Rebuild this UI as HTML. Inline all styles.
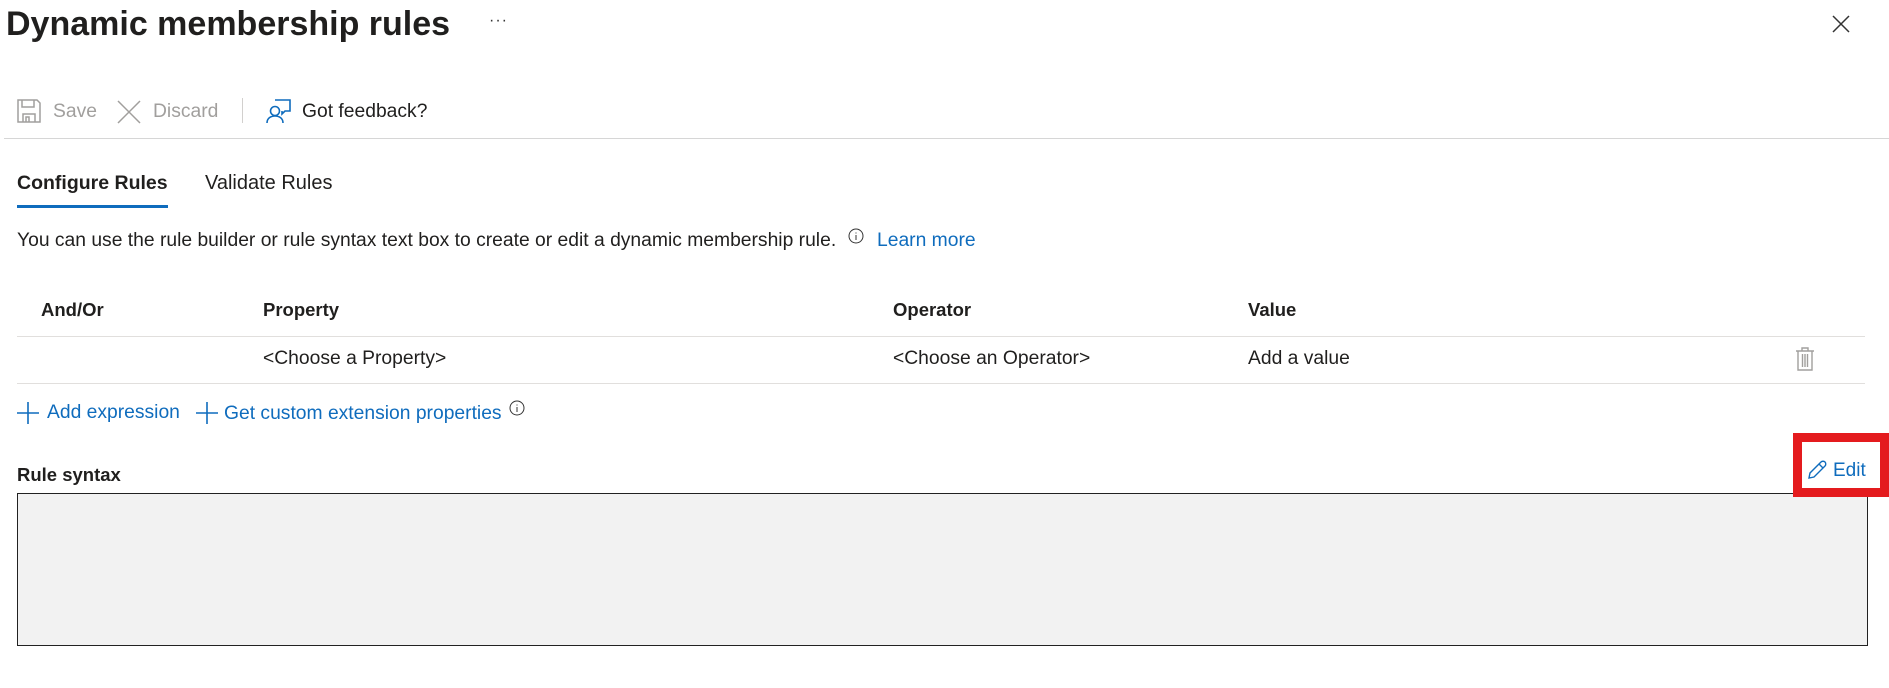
<!DOCTYPE html>
<html><head><meta charset="utf-8"><style>
body{margin:0;width:1889px;height:688px;background:#fff;font-family:"Liberation Sans",sans-serif;color:#201f1e;position:relative;overflow:hidden}
.a{position:absolute;white-space:nowrap}
.t{font-size:19.3px;line-height:22px}
.b{font-weight:bold}
.blue{color:#0f6cbd}
.gray{color:#a19f9d}
.hl{position:absolute;height:1px;background:#e1dfdd}
</style></head><body>
<div class="a b" style="left:6px;top:4px;font-size:34px;line-height:40px;color:#201f1e">Dynamic membership rules</div>
<div class="a" style="left:489px;top:12px;font-size:16px;color:#333;letter-spacing:1px">···</div>
<svg class="a" style="left:1832px;top:15px" width="18" height="18" viewBox="0 0 18 18"><path d="M1 1L17 17M17 1L1 17" stroke="#333" stroke-width="1.5"/></svg>

<svg class="a" style="left:17px;top:99px" width="24" height="24" viewBox="0 0 24 24" fill="none" stroke="#a19f9d" stroke-width="1.5"><path d="M1 1H20L23 4V23H1Z"/><path d="M5 1V8H17V1"/><path d="M6 23V15H18V23"/><path d="M9 23V18H12V23"/></svg>
<div class="a t gray" style="left:53px;top:101px">Save</div>
<svg class="a" style="left:117px;top:100px" width="24" height="24" viewBox="0 0 24 24"><path d="M1 1L23 23M23 1L1 23" stroke="#a19f9d" stroke-width="1.5"/></svg>
<div class="a t gray" style="left:153px;top:101px">Discard</div>
<div class="a" style="left:242px;top:98px;width:1px;height:25px;background:#d2d0ce"></div>
<svg class="a" style="left:266px;top:98px" width="26" height="26" viewBox="0 0 26 26" fill="none" stroke="#0f6cbd" stroke-width="1.6"><path d="M9 2H24V13H19L16 16V13"/><circle cx="9" cy="13" r="4.5"/><path d="M1 25C1 20 5 18 9 18C13 18 17 20 17 25"/></svg>
<div class="a t" style="left:302px;top:101px">Got feedback?</div>
<div class="hl" style="left:4px;top:138px;width:1885px;background:#d6d6d6"></div>

<div class="a t b" style="left:17px;top:172px;font-size:19.5px">Configure Rules</div>
<div class="a" style="left:17px;top:205px;width:151px;height:3px;background:#0f6cbd"></div>
<div class="a t" style="left:205px;top:172px;font-size:20px">Validate Rules</div>

<div class="a t" style="left:17px;top:230px">You can use the rule builder or rule syntax text box to create or edit a dynamic membership rule.</div>
<svg class="a" style="left:848px;top:228px" width="16" height="16" viewBox="0 0 16 16" fill="none" stroke="#333" stroke-width="1"><circle cx="8" cy="8" r="7"/><path d="M8 7V12M8 4.5V5.5"/></svg>
<div class="a t blue" style="left:877px;top:230px">Learn more</div>

<div class="a t b" style="left:41px;top:299px;font-size:18.5px">And/Or</div>
<div class="a t b" style="left:263px;top:299px;font-size:18.5px">Property</div>
<div class="a t b" style="left:893px;top:299px;font-size:18.5px">Operator</div>
<div class="a t b" style="left:1248px;top:299px;font-size:18.5px">Value</div>
<div class="hl" style="left:17px;top:336px;width:1848px"></div>
<div class="a t" style="left:263px;top:348px">&lt;Choose a Property&gt;</div>
<div class="a t" style="left:893px;top:348px">&lt;Choose an Operator&gt;</div>
<div class="a t" style="left:1248px;top:348px">Add a value</div>
<svg class="a" style="left:1795px;top:347px" width="20" height="25" viewBox="0 0 20 25" fill="none" stroke="#a19f9d" stroke-width="1.4"><path d="M1 4H19M7 4V1H13V4M3 4V23H17V4M7.5 7V20M10 7V20M12.5 7V20"/></svg>
<div class="hl" style="left:17px;top:383px;width:1848px"></div>

<svg class="a" style="left:17px;top:402px" width="22" height="22" viewBox="0 0 22 22"><path d="M11 0V22M0 11H22" stroke="#0f6cbd" stroke-width="1.6"/></svg>
<div class="a t blue" style="left:47px;top:402px">Add expression</div>
<svg class="a" style="left:196px;top:402px" width="22" height="22" viewBox="0 0 22 22"><path d="M11 0V22M0 11H22" stroke="#0f6cbd" stroke-width="1.6"/></svg>
<div class="a t blue" style="left:224px;top:403px">Get custom extension properties</div>
<svg class="a" style="left:509px;top:400px" width="16" height="16" viewBox="0 0 16 16" fill="none" stroke="#333" stroke-width="1"><circle cx="8" cy="8" r="7"/><path d="M8 7V12M8 4.5V5.5"/></svg>

<div class="a t b" style="left:17px;top:464px;font-size:18.5px">Rule syntax</div>
<div class="a" style="left:17px;top:493px;width:1849px;height:151px;background:#f2f2f2;border:1px solid #222"></div>

<div class="a" style="left:1793px;top:433px;width:78px;height:46px;border:9px solid #e41b1e;background:#fff"></div>
<svg class="a" style="left:1808px;top:460px" width="19" height="19" viewBox="0 0 19 19" fill="none" stroke="#0f6cbd" stroke-width="1.4"><path d="M1 18L2 13L13 2C14 1 16 1 17 2C18 3 18 5 17 6L6 17Z M11 4L15 8"/></svg>
<div class="a t blue" style="left:1833px;top:460px;font-size:19px">Edit</div>
</body></html>
